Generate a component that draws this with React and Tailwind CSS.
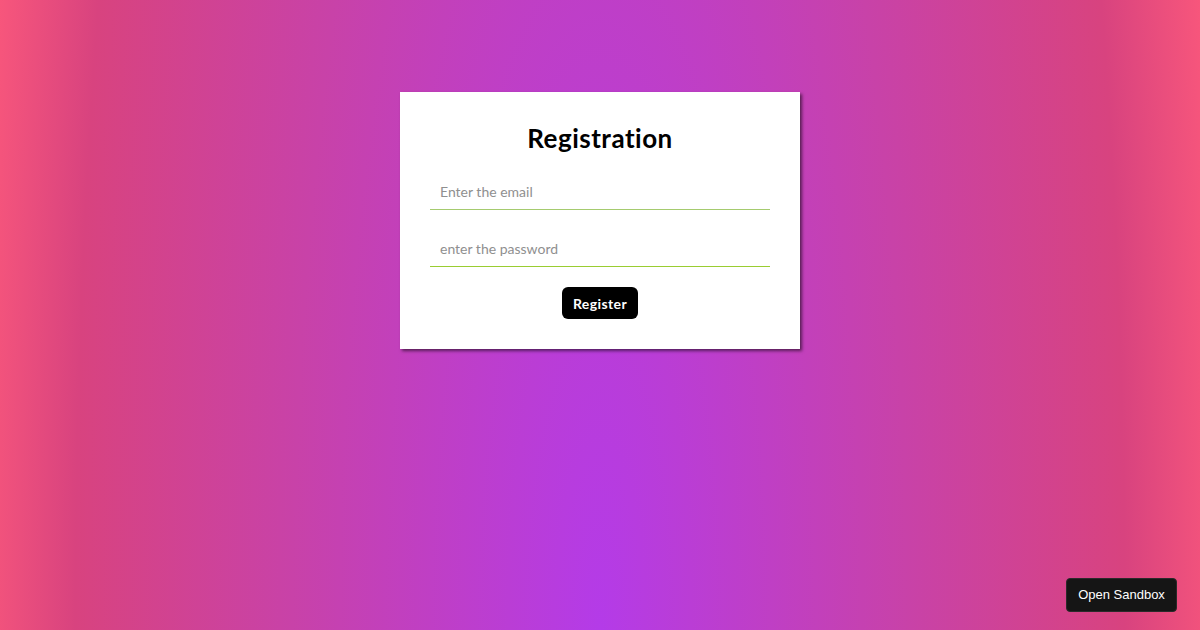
import React, { useState } from "react";

function App() {
  const [email, setEmail] = useState("");
  const [password, setPassword] = useState("");

  const handleSubmit = (e) => {
    e.preventDefault();
  };

  return (
    <div className="relative w-full h-[630px] overflow-hidden bg-[radial-gradient(ellipse_640px_2600px_at_50%_100%,#b43be8_0%,#c842a8_48%,#d8437f_82%,#fe5a7b_100%)] font-['Lato','Open_Sans',sans-serif]">
      <form
        onSubmit={handleSubmit}
        className="mx-auto mt-[92px] w-[400px] bg-white pt-[30px] pb-[30px] px-[30px] flex flex-col items-center shadow-[2px_2px_3px_rgba(0,0,0,0.55)]"
      >
        <h2 className="text-[26px] leading-8 font-bold tracking-[0.5px] text-black text-center">
          Registration
        </h2>

        <input
          type="email"
          value={email}
          autoComplete="off"
          placeholder="Enter the email"
          onChange={(e) => setEmail(e.target.value)}
          className="mt-[19px] w-full h-[37px] px-[10px] text-[14px] text-black placeholder:text-[#8f8f8f] border-b border-[#a5cb6f] outline-none"
        />

        <input
          type="password"
          value={password}
          autoComplete="off"
          placeholder="enter the password"
          onChange={(e) => setPassword(e.target.value)}
          className="mt-[20px] w-full h-[37px] px-[10px] text-[14px] text-black placeholder:text-[#8f8f8f] border-b border-[#9acd32] outline-none"
        />

        <button
          type="submit"
          className="mt-[20px] w-[76px] h-[32px] bg-black text-white text-[14px] font-bold tracking-[0.4px] rounded-[6px]"
        >
          Register
        </button>
      </form>

      <button className="absolute right-[23px] bottom-[18px] w-[111px] h-[34px] bg-[#151515] border border-[#2a2a2a] rounded-[4px] text-white text-[13px] font-['Liberation_Sans',Arial,sans-serif]">
        Open Sandbox
      </button>
    </div>
  );
}

export default App;
